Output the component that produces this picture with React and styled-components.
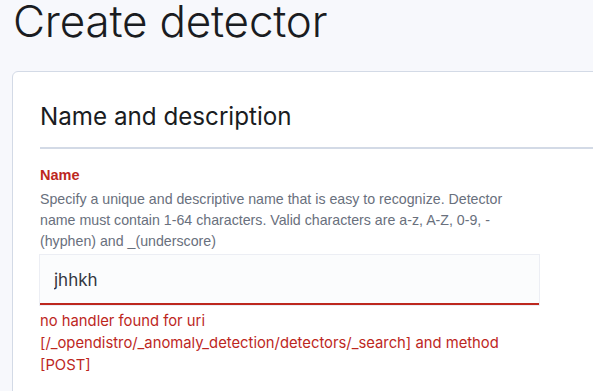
import React from 'react';
import styled, { createGlobalStyle } from 'styled-components';

const GlobalStyle = createGlobalStyle`
  html, body {
    margin: 0;
    padding: 0;
    background: #f7f8fc;
    overflow: hidden;
  }
  * {
    box-sizing: border-box;
  }
`;

export default function App() {
  return (
    <>
      <GlobalStyle />
      <Page>
        <PageTitle>Create detector</PageTitle>
        <Panel>
          <SectionTitle>Name and description</SectionTitle>
          <Rule />
          <FormRow>
            <Label invalid>Name</Label>
            <HelpText>
              Specify a unique and descriptive name that is easy to recognize.
              Detector name must contain 1-64 characters. Valid characters are
              a-z, A-Z, 0-9, -(hyphen) and _(underscore)
            </HelpText>
            <TextInput invalid defaultValue="jhhkh" />
            <ErrorText>
              no handler found for uri
              [/_opendistro/_anomaly_detection/detectors/_search] and method
              [POST]
            </ErrorText>
          </FormRow>
        </Panel>
      </Page>
    </>
  );
}

const Page = styled.div`
  padding-left: 12px;
  font-family: Inter, 'Liberation Sans', sans-serif;
`;

const PageTitle = styled.h1`
  margin: 0 0 0 1px;
  font-family: Inter, sans-serif;
  font-weight: 300;
  font-size: 44px;
  line-height: 42px;
  color: #1a1c21;
  letter-spacing: -0.2px;
`;

const Panel = styled.section`
  margin-top: 29px;
  width: calc(100% + 40px);
  height: calc(100vh - 60px);
  padding: 30px 0 0 27px;
  background: #fff;
  border: 1px solid #d3dae6;
  border-radius: 6px;
`;

const SectionTitle = styled.h2`
  margin: 0;
  font-family: Inter, sans-serif;
  font-weight: 400;
  font-size: 24.2px;
  line-height: 30px;
  color: #1a1c21;
`;

const Rule = styled.hr`
  margin: 15px 0 0;
  height: 2px;
  border: none;
  background: #d3dae6;
`;

const FormRow = styled.div`
  display: flex;
  flex-direction: column;
  padding-top: 16px;
`;

const Label = styled.label`
  font-family: 'Liberation Sans', Arial, sans-serif;
  font-weight: 700;
  font-size: 14.5px;
  line-height: 20px;
  color: ${(p) => (p.invalid ? '#bd271e' : '#1a1c21')};
`;

const HelpText = styled.div`
  margin-top: 4px;
  max-width: 499px;
  font-family: 'Liberation Sans', Arial, sans-serif;
  font-size: 14.2px;
  line-height: 21px;
  color: #69707d;
`;

const TextInput = styled.input`
  margin-top: 3px;
  width: 499px;
  height: 50px;
  padding: 0 14px;
  border: none;
  border-radius: 0;
  outline: none;
  background: #fbfcfd;
  box-shadow: 0 0 0 1px rgba(15, 39, 118, 0.08),
    inset 0 -2px 0 0 ${(p) => (p.invalid ? '#bd271e' : 'transparent')};
  font-family: Inter, sans-serif;
  font-size: 17px;
  color: #343741;
`;

const ErrorText = styled.div`
  margin-top: 5px;
  max-width: 499px;
  font-family: Inter, sans-serif;
  font-size: 14.8px;
  line-height: 22px;
  color: #bd271e;
`;
